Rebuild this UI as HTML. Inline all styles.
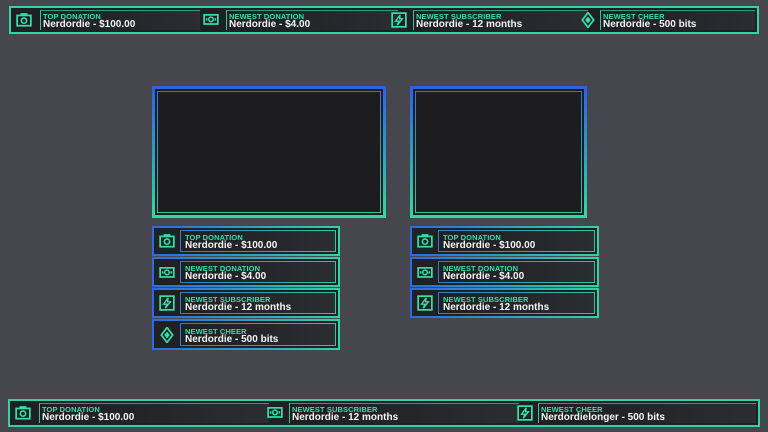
<!DOCTYPE html>
<html><head><style>
*{margin:0;padding:0;box-sizing:border-box}
body{width:768px;height:432px;background:#46474e;position:relative;overflow:hidden;font-family:"Liberation Sans",sans-serif}
.bar{position:absolute;border:2px solid #2fd3a5;background:#1f2023}
.ico{position:absolute}
.box{position:absolute;border-left:1px solid #2fc79c;border-top:1px solid #2a9c80;background:linear-gradient(90deg,#1e1f22 0%,#25272b 60%,#2a2d31 100%)}
.lb{position:absolute;color:#33e0a6;font-weight:bold;font-size:7.5px;letter-spacing:0.1px;white-space:nowrap}
.vl{position:absolute;color:#f4f4f4;font-weight:bold;font-size:10px;white-space:nowrap}
.cam{position:absolute;border:3px solid;border-image:linear-gradient(180deg,#2d62e8,#33d89e) 1;background:#1d1d1f}
.cam .in{position:absolute;left:2px;top:2px;right:2px;bottom:2px;border:1px solid #2a8fb4;border-image:linear-gradient(180deg,#2d7ad8,#2fc79c) 1}
.row{position:absolute;border:2px solid;border-image:linear-gradient(90deg,#2c6ae0,#2ed3a4) 1;background:#202125}
.row .box{left:26px;top:2px;right:2px;bottom:2px;border:1px solid;border-image:linear-gradient(90deg,#2a7fd0,#2fc79c) 1}
</style></head><body>

<svg width="0" height="0" style="position:absolute"><defs>
<g id="cam"><rect x="1" y="3" width="12" height="9" fill="none" stroke="#33e0a6" stroke-width="1.5"/><rect x="4" y="1" width="6" height="2" fill="#33e0a6"/><circle cx="7" cy="7.5" r="2.3" fill="none" stroke="#33e0a6" stroke-width="1.4"/></g>
<g id="money"><rect x="1" y="2.5" width="12" height="8" fill="none" stroke="#33e0a6" stroke-width="1.5"/><circle cx="7" cy="6.5" r="2" fill="none" stroke="#33e0a6" stroke-width="1.3"/><rect x="2.5" y="5.5" width="1.5" height="2" fill="#33e0a6"/><rect x="10" y="5.5" width="1.5" height="2" fill="#33e0a6"/></g>
<g id="bolt"><rect x="1" y="1" width="12" height="12" fill="none" stroke="#33e0a6" stroke-width="1.5"/><path d="M8 2.5 L4 8 H7 L5.5 11.5 L10 6 H7.5 Z" fill="none" stroke="#33e0a6" stroke-width="1.2"/></g>
<g id="dia"><path d="M7 0.5 L12 7 L7 13.5 L2 7 Z" fill="none" stroke="#33e0a6" stroke-width="1.5"/><path d="M7 4 L9.5 7 L7 10 L4.5 7 Z" fill="#33e0a6"/></g>
</defs></svg>

<!-- top bar -->
<div class="bar" style="left:9px;top:6px;width:750px;height:28px">
 <svg class="ico" style="left:5px;top:4px" width="16" height="16" viewBox="0 0 14 14"><use href="#cam"/></svg>
 <div class="box" style="left:29px;top:2px;width:160px;height:20px"></div>
 <div class="lb" style="left:32px;top:4px">TOP DONATION</div><div class="vl" style="left:32px;top:11px">Nerdordie - $100.00</div>
 <svg class="ico" style="left:192px;top:4px" width="16" height="16" viewBox="0 0 14 14"><use href="#money"/></svg>
 <div class="box" style="left:215px;top:2px;width:172px;height:20px"></div>
 <div class="lb" style="left:218px;top:4px">NEWEST DONATION</div><div class="vl" style="left:218px;top:11px">Nerdordie - $4.00</div>
 <svg class="ico" style="left:380px;top:4px" width="16" height="16" viewBox="0 0 14 14"><use href="#bolt"/></svg>
 <div class="box" style="left:402px;top:2px;width:175px;height:20px"></div>
 <div class="lb" style="left:405px;top:4px">NEWEST SUBSCRIBER</div><div class="vl" style="left:405px;top:11px">Nerdordie - 12 months</div>
 <svg class="ico" style="left:569px;top:4px" width="16" height="16" viewBox="0 0 14 14"><use href="#dia"/></svg>
 <div class="box" style="left:589px;top:2px;width:155px;height:20px"></div>
 <div class="lb" style="left:592px;top:4px">NEWEST CHEER</div><div class="vl" style="left:592px;top:11px">Nerdordie - 500 bits</div>
</div>

<!-- cams -->
<div class="cam" style="left:152px;top:86px;width:234px;height:132px"><div class="in"></div></div>
<div class="cam" style="left:410px;top:86px;width:177px;height:132px"><div class="in"></div></div>

<!-- left rows -->
<div class="row" style="left:152px;top:226px;width:188px;height:30px"><svg class="ico" style="left:5px;top:5px" width="16" height="16" viewBox="0 0 14 14"><use href="#cam"/></svg><div class="box"></div><div class="lb" style="left:31px;top:5px">TOP DONATION</div><div class="vl" style="left:31px;top:12px">Nerdordie - $100.00</div></div>
<div class="row" style="left:152px;top:257px;width:188px;height:30px"><svg class="ico" style="left:5px;top:6px" width="16" height="16" viewBox="0 0 14 14"><use href="#money"/></svg><div class="box"></div><div class="lb" style="left:31px;top:5px">NEWEST DONATION</div><div class="vl" style="left:31px;top:12px">Nerdordie - $4.00</div></div>
<div class="row" style="left:152px;top:288px;width:188px;height:30px"><svg class="ico" style="left:5px;top:5px" width="16" height="16" viewBox="0 0 14 14"><use href="#bolt"/></svg><div class="box"></div><div class="lb" style="left:31px;top:5px">NEWEST SUBSCRIBER</div><div class="vl" style="left:31px;top:12px">Nerdordie - 12 months</div></div>
<div class="row" style="left:152px;top:319px;width:188px;height:31px"><svg class="ico" style="left:5px;top:6px" width="16" height="16" viewBox="0 0 14 14"><use href="#dia"/></svg><div class="box"></div><div class="lb" style="left:31px;top:6px">NEWEST CHEER</div><div class="vl" style="left:31px;top:13px">Nerdordie - 500 bits</div></div>

<!-- right rows -->
<div class="row" style="left:410px;top:226px;width:189px;height:30px"><svg class="ico" style="left:5px;top:5px" width="16" height="16" viewBox="0 0 14 14"><use href="#cam"/></svg><div class="box"></div><div class="lb" style="left:31px;top:5px">TOP DONATION</div><div class="vl" style="left:31px;top:12px">Nerdordie - $100.00</div></div>
<div class="row" style="left:410px;top:257px;width:189px;height:30px"><svg class="ico" style="left:5px;top:6px" width="16" height="16" viewBox="0 0 14 14"><use href="#money"/></svg><div class="box"></div><div class="lb" style="left:31px;top:5px">NEWEST DONATION</div><div class="vl" style="left:31px;top:12px">Nerdordie - $4.00</div></div>
<div class="row" style="left:410px;top:288px;width:189px;height:30px"><svg class="ico" style="left:5px;top:5px" width="16" height="16" viewBox="0 0 14 14"><use href="#bolt"/></svg><div class="box"></div><div class="lb" style="left:31px;top:5px">NEWEST SUBSCRIBER</div><div class="vl" style="left:31px;top:12px">Nerdordie - 12 months</div></div>

<!-- bottom bar -->
<div class="bar" style="left:8px;top:399px;width:752px;height:28px">
 <svg class="ico" style="left:5px;top:4px" width="16" height="16" viewBox="0 0 14 14"><use href="#cam"/></svg>
 <div class="box" style="left:29px;top:2px;width:230px;height:20px"></div>
 <div class="lb" style="left:32px;top:4px">TOP DONATION</div><div class="vl" style="left:32px;top:11px">Nerdordie - $100.00</div>
 <svg class="ico" style="left:257px;top:4px" width="16" height="16" viewBox="0 0 14 14"><use href="#money"/></svg>
 <div class="box" style="left:279px;top:2px;width:230px;height:20px"></div>
 <div class="lb" style="left:282px;top:4px">NEWEST SUBSCRIBER</div><div class="vl" style="left:282px;top:11px">Nerdordie - 12 months</div>
 <svg class="ico" style="left:507px;top:4px" width="16" height="16" viewBox="0 0 14 14"><use href="#bolt"/></svg>
 <div class="box" style="left:528px;top:2px;width:218px;height:20px"></div>
 <div class="lb" style="left:531px;top:4px">NEWEST CHEER</div><div class="vl" style="left:531px;top:11px">Nerdordielonger - 500 bits</div>
</div>
</body></html>
